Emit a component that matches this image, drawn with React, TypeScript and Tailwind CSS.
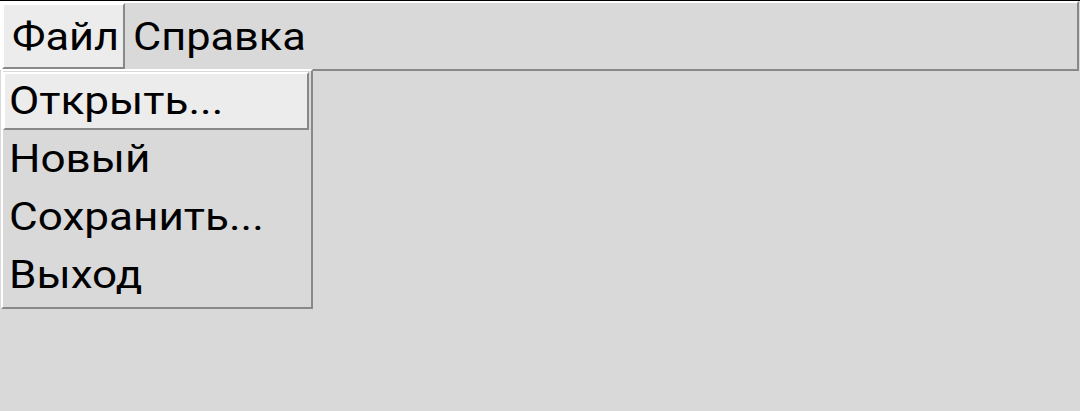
const items = ["Открыть...", "Новый", "Сохранить...", "Выход"];

// the captured text is wider than Roboto's natural proportions, so stretch it a bit
const Label = ({ children, wide = true }: { children: React.ReactNode; wide?: boolean }) => (
  <span className={wide ? "inline-block origin-left scale-x-[1.16] whitespace-nowrap" : "inline-block origin-left scale-x-[1.14] whitespace-nowrap"}>
    {children}
  </span>
);

const App = (): React.ReactNode => {
  return (
    <div className="relative h-[411px] w-[1080px] overflow-hidden bg-[#d9d9d9] font-['Roboto',sans-serif] text-[38px] text-black">
      <div className="h-px bg-black" />

      {/* menubar */}
      <div className="flex h-[70px] w-[1079px] border-2 border-t-white border-l-white border-r-[#888] border-b-[#888]">
        <div className="flex w-[123px] items-center border-2 border-t-white border-l-white border-r-[#888] border-b-[#888] bg-[#ececec] pl-[8px] pt-[2px]">
          <Label wide={false}>Файл</Label>
        </div>
        <div className="flex items-center pl-[8px] pt-[2px]">
          <Label wide={false}>Справка</Label>
        </div>
      </div>

      {/* dropdown */}
      <div className="absolute left-[1px] top-[69px] w-[312px] border-2 border-t-white border-l-white border-r-[#888] border-b-[#888] bg-[#d9d9d9] pt-px pr-[2px] pb-[3px]">
        {items.map((item, index) => (
          <div
            key={index}
            className={
              index === 0
                ? "flex h-[58px] items-center border-2 border-t-white border-l-white border-r-[#888] border-b-[#888] bg-[#ececec] pl-[4px]"
                : "flex h-[58px] items-center border-2 border-transparent pl-[4px]"
            }
          >
            <Label>{item}</Label>
          </div>
        ))}
      </div>
    </div>
  );
};
export default App;
